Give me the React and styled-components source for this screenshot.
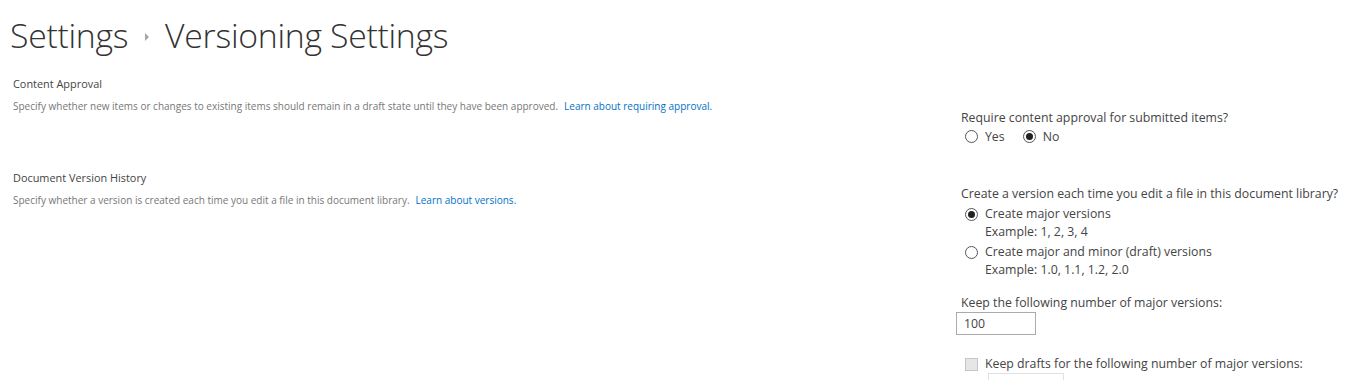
import React from "react";
import styled, { createGlobalStyle } from "styled-components";

const Global = createGlobalStyle`
  html, body { margin: 0; padding: 0; background: #fff; }
  body { font-family: "Open Sans", "Noto Sans", sans-serif; color: #444; }
`;

const Page = styled.div`
  width: 1369px;
  height: 380px;
  overflow: hidden;
  box-sizing: border-box;
  padding: 14px 0 0 10px;
`;

const TitleBar = styled.h1`
  margin: 0;
  display: flex;
  align-items: center;
  gap: 16.5px;
  font-family: "Open Sans", sans-serif;
  font-weight: 300;
  font-size: 33.8px;
  line-height: 42px;
  color: #333;
  letter-spacing: -0.3px;
`;

const Crumb = styled.span``;

const Sep = styled.span`
  width: 0;
  height: 0;
  border-top: 4px solid transparent;
  border-bottom: 4px solid transparent;
  border-left: 4px solid #a6a6a6;
  margin-top: 4px;
`;

const Sections = styled.div`
  margin-top: 20px;
  padding-left: 3px;
`;

const Section = styled.div`
  display: grid;
  grid-template-columns: 948px 1fr;
  height: ${(p) => p.$h}px;
`;

const Left = styled.div`
  display: flex;
  flex-direction: column;
`;

const Heading = styled.div`
  font-size: 10.9px;
  line-height: 16px;
  color: #444;
  font-family: "Open Sans", sans-serif;
`;

const Desc = styled.div`
  margin-top: 7px;
  font-size: 10px;
  line-height: 14px;
  color: #777;
`;

const Link = styled.a`
  color: #0072c6;
  text-decoration: none;
  margin-left: 6px;
`;

const Right = styled.div`
  padding-top: ${(p) => p.$top}px;
  font-size: 12.3px;
  line-height: 18px;
  color: #444;
`;

const Question = styled.div``;

const RadioRow = styled.div`
  display: flex;
  align-items: center;
  gap: 18px;
  padding-left: 4px;
  height: 19px;
`;

const RadioOpt = styled.label`
  display: flex;
  align-items: center;
  gap: 7px;
`;

const RadioCircle = styled.span`
  box-sizing: border-box;
  width: 13px;
  height: 13px;
  border-radius: 50%;
  border: 1px solid #555;
  display: flex;
  align-items: center;
  justify-content: center;
  &::after {
    content: "";
    width: 7px;
    height: 7px;
    border-radius: 50%;
    background: ${(p) => (p.$on ? "#222" : "transparent")};
  }
`;

const Option = styled.div`
  padding-left: 4px;
  margin-top: ${(p) => p.$mt || 0}px;
`;

const Example = styled.div`
  padding-left: 24px;
  line-height: 18px;
`;

const Field = styled.div`
  margin-top: ${(p) => p.$mt || 0}px;
`;

const Input = styled.div`
  box-sizing: border-box;
  width: ${(p) => p.$w}px;
  height: 23px;
  border: 1px solid ${(p) => (p.$disabled ? "#e1e1e1" : "#ababab")};
  margin-left: ${(p) => p.$ml || 0}px;
  margin-top: 0px;
  padding: 2px 7px;
  font-size: 12.3px;
  line-height: 17px;
  color: #444;
`;

const CheckRow = styled.label`
  display: flex;
  align-items: center;
  gap: 7px;
  padding-left: 4px;
`;

const CheckBox = styled.span`
  box-sizing: border-box;
  width: 13px;
  height: 13px;
  border: 1px solid #c6c6c6;
  background: #e6e6e6;
`;

function Radio({ on, children }) {
  return (
    <RadioOpt>
      <RadioCircle $on={on} />
      {children}
    </RadioOpt>
  );
}

export default function App() {
  return (
    <>
      <Global />
      <Page>
        <TitleBar>
          <Crumb>Settings</Crumb>
          <Sep />
          <Crumb>Versioning Settings</Crumb>
        </TitleBar>
        <Sections>
          <Section $h={94}>
            <Left>
              <Heading>Content Approval</Heading>
              <Desc>
                Specify whether new items or changes to existing items should remain in a draft state until they have been approved.
                <Link href="#">Learn about requiring approval.</Link>
              </Desc>
            </Left>
            <Right $top={33}>
              <Question>Require content approval for submitted items?</Question>
              <RadioRow>
                <Radio>Yes</Radio>
                <Radio on>No</Radio>
              </RadioRow>
            </Right>
          </Section>
          <Section $h={220}>
            <Left>
              <Heading>Document Version History</Heading>
              <Desc>
                Specify whether a version is created each time you edit a file in this document library.
                <Link href="#">Learn about versions.</Link>
              </Desc>
            </Left>
            <Right $top={15}>
              <Question>Create a version each time you edit a file in this document library?</Question>
              <Option $mt={2}>
                <Radio on>Create major versions</Radio>
              </Option>
              <Example>Example: 1, 2, 3, 4</Example>
              <Option $mt={2}>
                <Radio>Create major and minor (draft) versions</Radio>
              </Option>
              <Example>Example: 1.0, 1.1, 1.2, 2.0</Example>
              <Field $mt={15}>
                Keep the following number of major versions:
                <Input $w={80} $ml={-5}>100</Input>
              </Field>
              <Field $mt={20}>
                <CheckRow>
                  <CheckBox />
                  Keep drafts for the following number of major versions:
                </CheckRow>
                <Input $w={76} $ml={27} $disabled />
              </Field>
            </Right>
          </Section>
        </Sections>
      </Page>
    </>
  );
}
